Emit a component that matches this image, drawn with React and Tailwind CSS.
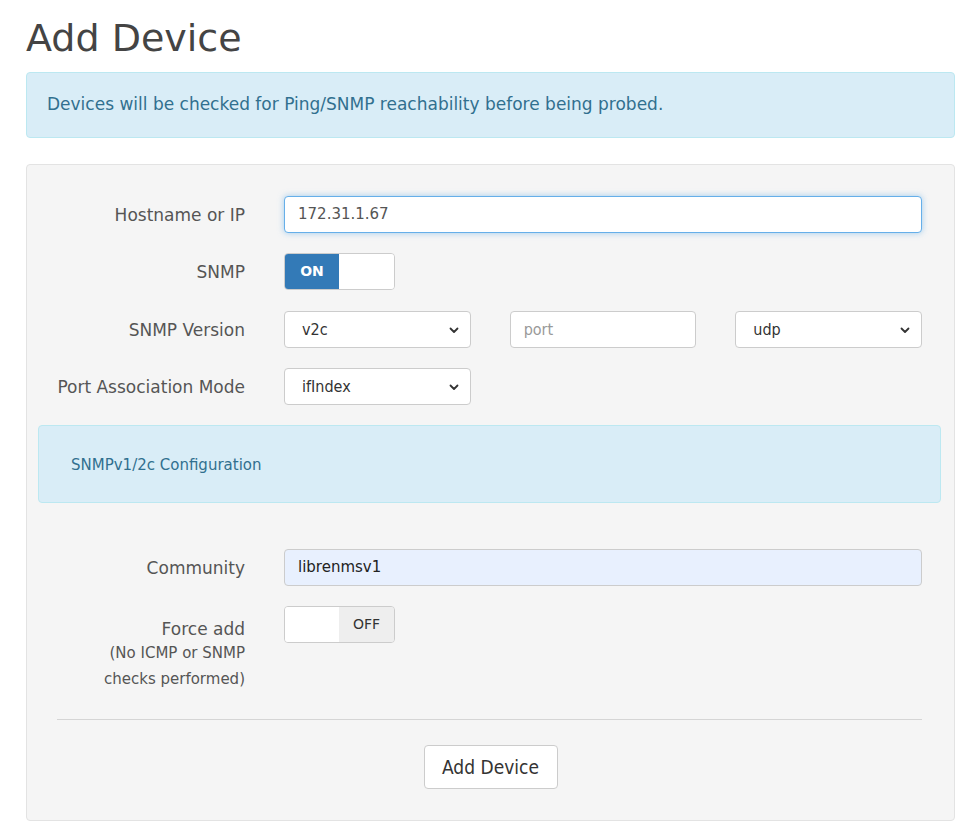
const font = { fontFamily: '"DejaVu Sans", Verdana, sans-serif' };

const Chevron = () => (
  <svg className="absolute right-[10px] top-1/2 -translate-y-1/2" width="12" height="12" viewBox="0 0 12 12" fill="none">
    <path d="M2.5 4.5 L6 8 L9.5 4.5" stroke="#333" strokeWidth="1.8" strokeLinecap="round" strokeLinejoin="round" />
  </svg>
);

const Select = ({ value }) => (
  <div className="relative h-[37px] bg-white border border-[#ccc] rounded-[4px] flex items-center pl-[17px] text-[16px] text-[#333] font-['DejaVu_Sans_Condensed','Liberation_Sans_Narrow',sans-serif]">
    {value}
    <Chevron />
  </div>
);

const Toggle = ({ on }) => (
  <div className="flex h-[37px] w-[111px] border border-[#ccc] rounded-[4px] overflow-hidden text-[14px]">
    {on ? (
      <>
        <div className="w-[54px] bg-[#337ab7] text-white font-semibold flex items-center justify-center">ON</div>
        <div className="flex-1 bg-white" />
      </>
    ) : (
      <>
        <div className="w-[54px] bg-white" />
        <div className="flex-1 bg-[#eeeeee] text-[#333] flex items-center justify-center">OFF</div>
      </>
    )}
  </div>
);

const Row = ({ label, children, className = '' }) => (
  <div className={`flex items-center ${className}`}>
    <div className="w-[218px] text-right text-[17px] text-[#555] shrink-0 pt-[3px]">{label}</div>
    <div className="ml-[39px] flex-1">{children}</div>
  </div>
);

export default function App() {
  return (
    <div className="bg-white pl-[26px] pr-[20px] pt-[14px] pb-[7px] text-[#555]" style={font}>
      <h1 className="text-[38px] leading-[48px] text-[#444] font-normal">Add Device</h1>
      <div className="mt-[10px] h-[66px] bg-[#d9edf7] border border-[#bce8f1] rounded-[4px] flex items-center pl-[20px] text-[17px] text-[#31708f]">
        Devices will be checked for Ping/SNMP reachability before being probed.
      </div>

      <div className="mt-[26px] bg-[#f5f5f5] border border-[#e3e3e3] rounded-[4px] pt-[31px] pb-[31px] pr-[32px]">
        <Row label="Hostname or IP">
          <div className="h-[37px] bg-white border border-[#66afe9] rounded-[4px] shadow-[0_0_6px_rgba(102,175,233,0.6)] flex items-center pl-[13px] text-[15px] text-[#555]">
            172.31.1.67
          </div>
        </Row>
        <Row label="SNMP" className="mt-[20px]">
          <Toggle on />
        </Row>
        <Row label="SNMP Version" className="mt-[21px]">
          <div className="grid grid-cols-3 gap-[39px]">
            <Select value="v2c" />
            <div className="h-[37px] bg-white border border-[#ccc] rounded-[4px] flex items-center pl-[13px] text-[16px] text-[#999] font-['DejaVu_Sans_Condensed','Liberation_Sans_Narrow',sans-serif]">
              port
            </div>
            <Select value="udp" />
          </div>
        </Row>
        <Row label="Port Association Mode" className="mt-[20px]">
          <div className="w-[187px]">
            <Select value="ifIndex" />
          </div>
        </Row>

        <div className="mt-[20px] ml-[11px] mr-[-19px] h-[78px] bg-[#d9edf7] border border-[#bce8f1] rounded-[4px] flex items-center pl-[32px] pt-[2px] text-[15px] text-[#31708f]">
          SNMPv1/2c Configuration
        </div>

        <Row label="Community" className="mt-[46px]">
          <div className="h-[37px] bg-[#e8f0fe] border border-[#ccc] rounded-[4px] flex items-center pl-[13px] text-[15px] text-[#222]">
            librenmsv1
          </div>
        </Row>

        <div className="flex mt-[20px]">
          <div className="w-[218px] shrink-0 text-right">
            <div className="text-[17px] text-[#555] leading-[22px] mt-[12px]">Force add</div>
            <div className="text-[15px] text-[#555] leading-[26px]">(No ICMP or SNMP</div>
            <div className="text-[15px] text-[#555] leading-[26px]">checks performed)</div>
          </div>
          <div className="ml-[39px]">
            <Toggle on={false} />
          </div>
        </div>

        <div className="mt-[27px] ml-[30px] border-t border-[#d5d5d5]" />

        <div className="mt-[25px] flex justify-center pl-[32px]">
          <button className="h-[44px] w-[134px] bg-white border border-[#ccc] rounded-[4px] text-[19px] text-[#333] font-['DejaVu_Sans_Condensed','Liberation_Sans_Narrow',sans-serif]">
            Add Device
          </button>
        </div>
      </div>
    </div>
  );
}
